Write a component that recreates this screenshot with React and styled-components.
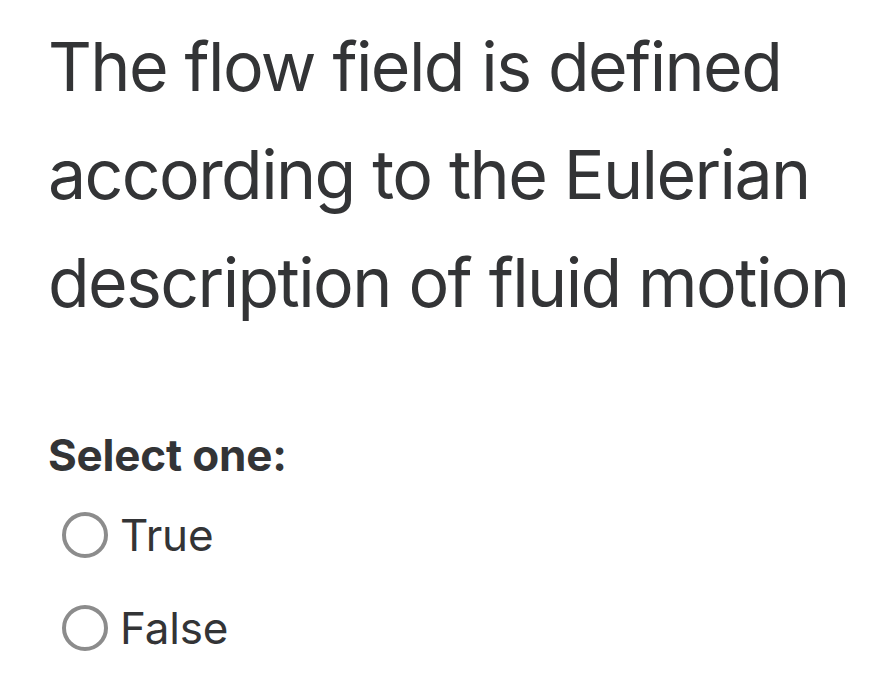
import React from "react";
import styled, { createGlobalStyle } from "styled-components";

const GlobalStyle = createGlobalStyle`
  body {
    margin: 0;
    background: #ffffff;
    font-family: Inter, Roboto, "Liberation Sans", sans-serif;
    font-variant-ligatures: none;
    color: #333436;
  }
`;

const Page = styled.div`
  padding: 12px 0 0 48px;
  display: flex;
  flex-direction: column;
`;

const Question = styled.h1`
  margin: 0;
  font-size: 68px;
  font-weight: 400;
  line-height: 108px;
  letter-spacing: -1.6px;
  max-width: 820px;
`;

const Prompt = styled.div`
  margin-top: 93px;
  font-size: 44px;
  font-weight: 700;
  line-height: 52px;
  letter-spacing: -0.2px;
`;

const Options = styled.div`
  display: flex;
  flex-direction: column;
  gap: 47px;
  margin-top: 31px;
  padding-left: 14px;
`;

const Option = styled.label`
  display: flex;
  align-items: center;
  gap: 12px;
  font-size: 44px;
  line-height: 46px;
  letter-spacing: -0.2px;
`;

const Radio = styled.span`
  width: 46px;
  height: 46px;
  box-sizing: border-box;
  border: 4px solid #8c8c8c;
  border-radius: 50%;
  flex-shrink: 0;
`;

const App = () => {
  return (
    <>
      <GlobalStyle />
      <Page>
        <Question>
          The flow field is defined according to the Eulerian description of
          fluid motion
        </Question>
        <Prompt>Select one:</Prompt>
        <Options>
          {["True", "False"].map((label) => (
            <Option key={label}>
              <Radio />
              {label}
            </Option>
          ))}
        </Options>
      </Page>
    </>
  );
};

export default App;
